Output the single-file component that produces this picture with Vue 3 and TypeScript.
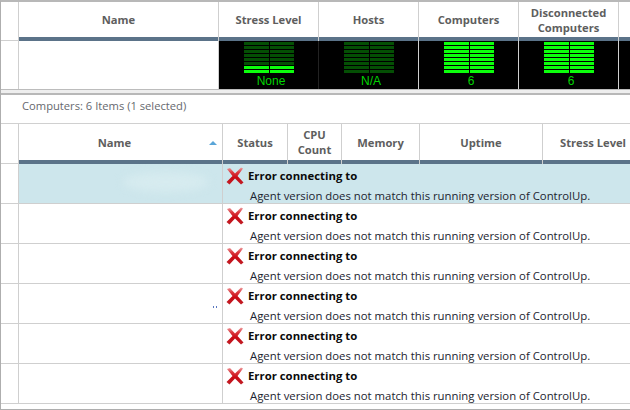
<script setup lang="ts">
interface Meter { label: string; lit: number }
const meters: Meter[] = [
  { label: 'None', lit: 2 },
  { label: 'N/A', lit: 0 },
  { label: '6', lit: 8 },
  { label: '6', lit: 8 },
]
const topHeads = ['Stress Level', 'Hosts', 'Computers', 'Disconnected Computers']
const rows = [0, 1, 2, 3, 4, 5]
const isLit = (m: Meter, i: number) => i > 8 - m.lit
</script>

<template>
  <div class="page">
    <section class="top">
      <div class="top-head">
        <div class="gutter head-gutter"></div>
        <div class="hcell c-name">Name</div>
        <div v-for="h in topHeads" :key="h" class="hcell c-100">{{ h }}</div>
        <div class="hcell c-rest"></div>
      </div>
      <div class="top-data">
        <div class="gutter"></div>
        <div class="c-name"></div>
        <div v-for="(m, mi) in meters" :key="mi" class="meter c-100" :class="{ soft: mi === 0 }">
          <div class="leds">
            <template v-for="i in 8" :key="i">
              <span class="led" :class="{ on: isLit(m, i) }"></span>
              <span class="led" :class="{ on: isLit(m, i) }"></span>
            </template>
          </div>
          <div class="meter-label">{{ m.label }}</div>
        </div>
        <div class="meter c-rest"></div>
      </div>
    </section>

    <div class="splitter"></div>

    <div class="caption">Computers: 6 Items (1 selected)</div>

    <section class="list">
      <div class="list-head">
        <div class="gutter head-gutter"></div>
        <div class="hcell l-name"><span>Name</span><i class="sort"></i></div>
        <div class="hcell l-status">Status</div>
        <div class="hcell l-cpu">CPU Count</div>
        <div class="hcell l-mem">Memory</div>
        <div class="hcell l-up">Uptime</div>
        <div class="hcell l-stress">Stress Level</div>
      </div>
      <div v-for="r in rows" :key="r" class="row" :class="{ selected: r === 0 }">
        <div class="gutter"></div>
        <div class="l-name name-cell">
          <span v-if="r === 0" class="smudge"></span>
          <span v-if="r === 3" class="specks"></span>
        </div>
        <div class="status">
          <svg class="x" viewBox="0 0 18 18" width="18" height="18" aria-hidden="true">
            <defs>
              <linearGradient :id="`xg${r}`" x1="0" y1="0" x2="0" y2="1">
                <stop offset="0" stop-color="#eea0a2" />
                <stop offset="0.28" stop-color="#dc3a40" />
                <stop offset="0.6" stop-color="#c80a14" />
                <stop offset="1" stop-color="#c02028" />
              </linearGradient>
            </defs>
            <path
              d="M1 2 L4 1 L9 6.5 L15 0.5 L17 1.5 L11.5 9 L17.5 15.5 L15 17.5 L9 11.5 L3.5 17.5 L0.5 15 L6.5 9 Z"
              :fill="`url(#xg${r})`"
            />
          </svg>
          <div class="msg">
            <div class="msg-title">Error connecting to</div>
            <div class="msg-body">Agent version does not match this running version of ControlUp.</div>
          </div>
        </div>
      </div>
    </section>
    <div class="tail"></div>
  </div>
</template>

<style>
html, body { margin: 0; background: #fff; }
</style>

<style scoped>
.page {
  width: 630px;
  height: 410px;
  box-sizing: border-box;
  overflow: hidden;
  background: #fff;
  border-left: 1px solid #aeaeae;
  border-top: 2px solid #b8b8b8;
  font-family: "Open Sans", "Noto Sans", sans-serif;
  font-size: 11.35px;
  color: #111;
}
.top-head { display: flex; height: 39px; }
.list-head { display: flex; height: 40px; }
.gutter {
  width: 18px;
  flex: none;
  box-sizing: border-box;
  border-right: 1px solid #cfcfcf;
}
.head-gutter { border-bottom: 1px solid #cfcfcf; }
.hcell {
  flex: none;
  box-sizing: border-box;
  border-right: 1px solid #cfcfcf;
  display: flex;
  align-items: center;
  justify-content: center;
  text-align: center;
  font-weight: 700;
  font-size: 11.2px;
  line-height: 15px;
  color: #5e5e5e;
  padding: 0 6px 4px;
  background: linear-gradient(#5b7389, #5b7389) left bottom / 100% 4px no-repeat;
}
.c-name { width: 200px; flex: none; box-sizing: border-box; border-right: 1px solid #cfcfcf; }
.c-100 { width: 100px; flex: none; box-sizing: border-box; }
.hcell.c-100 { border-right: 1px solid #cfcfcf; }
.c-rest { flex: 1; }
.hcell.c-rest { border-right: 0; }
.top-data { display: flex; height: 48px; }
.meter {
  background: #000;
  border-right: 1px solid #cfcfcf;
  display: flex;
  flex-direction: column;
  align-items: center;
  padding: 1px 0 0 1px;
}
.meter.soft { border-right-color: #222; }
.meter.c-rest { border-right: 0; }
.leds {
  display: grid;
  grid-template-columns: 25px 24px;
  grid-auto-rows: 3px;
  column-gap: 1px;
  row-gap: 1px;
}
.led { background: #044f04; }
.led.on { background: #0cff0c; }
.meter-label {
  margin-top: 2px;
  margin-left: 4px;
  font-family: "Liberation Sans", Arial, sans-serif;
  font-size: 12px;
  line-height: 13px;
  color: #00d400;
}
.splitter {
  height: 6px;
  box-sizing: border-box;
  background: #eeeeee;
  border-top: 1px solid #bcbcbc;
  border-bottom: 2px solid #b8b8b8;
}
.caption {
  height: 28px;
  box-sizing: border-box;
  padding: 3px 0 0 21px;
  font-size: 11.2px;
  line-height: 16px;
  color: #66686e;
}
.list { border-top: 1px solid #d0d0d0; }
.l-name { width: 204px; flex: none; box-sizing: border-box; border-right: 1px solid #cfcfcf; }
.hcell.l-name { position: relative; padding-right: 18px; }
.sort {
  position: absolute;
  right: 5px;
  top: 17px;
  width: 0;
  height: 0;
  border-left: 4px solid transparent;
  border-right: 4px solid transparent;
  border-bottom: 4px solid #5aa5d8;
}
.l-status { width: 65px; }
.l-cpu { width: 54px; padding-left: 0; padding-right: 0; }
.l-mem { width: 78px; }
.l-up { width: 123px; }
.l-stress { width: 100px; border-right: 0; padding-left: 0; padding-right: 0; white-space: nowrap; }
.row {
  display: flex;
  height: 40px;
  box-sizing: border-box;
  border-bottom: 1px solid #cfcfcf;
}
.row.selected { background: linear-gradient(#cde6ec, #cde6ec) 18px 0 / 100% 100% no-repeat; }
.name-cell { position: relative; }
.smudge {
  position: absolute;
  left: 104px;
  top: 8px;
  width: 86px;
  height: 20px;
  background: #d6ebef;
  border-radius: 50%;
  filter: blur(4px);
}
.specks {
  position: absolute;
  left: 194px;
  top: 22px;
  width: 1px;
  height: 2px;
  background: #5a78c0;
  box-shadow: 3px 0 0 #5a78c0;
}
.status {
  flex: 1;
  display: flex;
  align-items: flex-start;
  padding: 3px 0 0 3px;
}
.x { flex: none; margin-right: 4px; }
.msg-title {
  font-weight: 700;
  font-size: 11.35px;
  line-height: 17px;
  color: #0a0a0a;
}
.msg-body {
  margin: 3px 0 0 2px;
  line-height: 17px;
  font-size: 11.35px;
  color: #1c2430;
  white-space: nowrap;
}
.tail {
  height: 6px;
  box-sizing: border-box;
  border-bottom: 1px solid #aeaeae;
}
</style>
